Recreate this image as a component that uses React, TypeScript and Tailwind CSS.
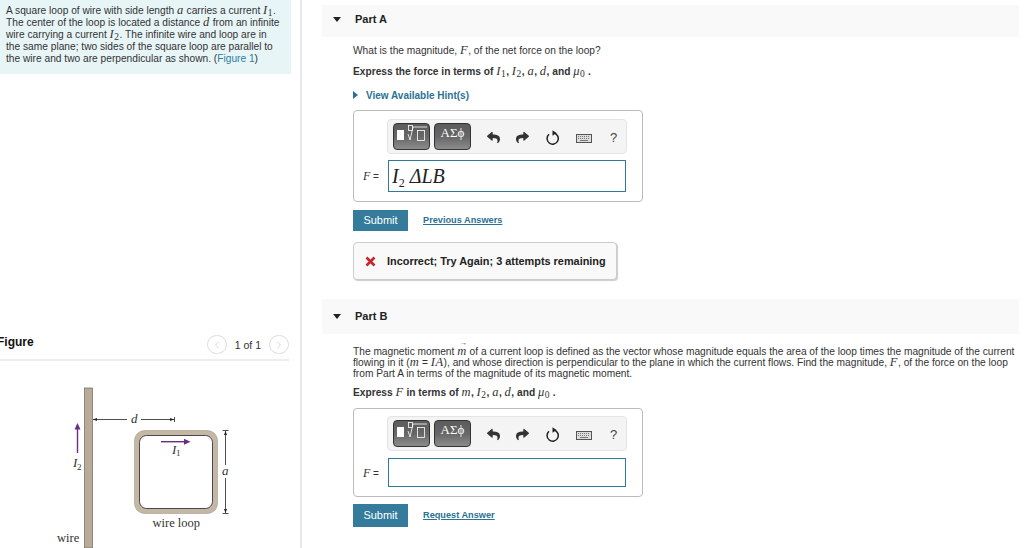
import { FaReply, FaShare } from 'react-icons/fa'
import { ChevronLeft, ChevronRight } from 'lucide-react'
import type { ReactNode } from 'react'

const serif = 'font-["Liberation_Serif",serif]'

function M({ children }: { children: ReactNode }) {
  return <span className={`${serif} italic text-[12.5px] leading-[0] font-normal tracking-[0.5px]`}>{children}</span>
}

function Sub({ base, sub }: { base: string; sub: string }) {
  return (
    <span className={`${serif} text-[12.5px] leading-[0] font-normal tracking-[0.5px]`}>
      <i>{base}</i>
      <span className="relative top-[2px] text-[9.5px] leading-[0]">{sub}</span>
    </span>
  )
}

function Toolbar() {
  return (
    <div className="ml-[33px] flex h-[35px] w-[240px] items-center rounded-[4px] border border-[#e4e4e4] bg-[#f4f4f4] pl-[5px]">
      <div className="h-[27px] w-[37px] rounded-[4px] border border-[#333] bg-gradient-to-b from-[#5c5c5c] via-[#666] to-[#8c8c8c]">
        <svg width="35" height="25" viewBox="0 0 35 25" fill="none">
          <rect x="3" y="6" width="7" height="10" fill="#fff" />
          <rect x="14.5" y="1.5" width="4" height="5" stroke="#fff" strokeWidth="0.8" />
          <path d="M14 10l2 6 3-13h14" stroke="#fff" strokeWidth="0.8" />
          <rect x="23.5" y="6.5" width="7" height="10" stroke="#fff" strokeWidth="0.8" />
        </svg>
      </div>
      <div className={`ml-[4px] flex h-[27px] w-[37px] justify-center rounded-[4px] border border-[#333] bg-gradient-to-b from-[#5c5c5c] via-[#666] to-[#8c8c8c] text-[13px] leading-[17px] text-white ${serif}`}>
        ΑΣϕ
      </div>
      <FaReply className="ml-[16px] mt-[2px] text-[#333]" size={13} />
      <FaShare className="ml-[16px] mt-[2px] text-[#333]" size={13} />
      <svg className="ml-[17px] mt-[2px]" width="14" height="15" viewBox="0 0 14 15" fill="none">
        <path d="M8 3.1A5.6 5.6 0 1 1 3 4.3" stroke="#222" strokeWidth="1.5" />
        <path d="M6.5 0.2v5.6L10.5 3z" fill="#222" />
      </svg>
      <svg className="ml-[16px] mt-[4px]" width="16" height="9" viewBox="0 0 16 9" fill="none">
        <rect x="0.5" y="0.5" width="15" height="8" fill="#ddd" stroke="#555" />
        <path d="M2 2.5h12M2 4.5h12" stroke="#777" strokeDasharray="1 1" />
        <path d="M4 6.5h8" stroke="#777" />
      </svg>
      <span className="ml-[18px] mt-[2px] text-[13px] text-[#444]">?</span>
    </div>
  )
}

function AnswerBox({ height, pad, gap, inputHeight, children }: { height: string; pad: string; gap: string; inputHeight: string; children?: ReactNode }) {
  return (
    <div className={`ml-[51px] w-[290px] rounded-[4px] border border-[#bbb] ${pad} ${height}`}>
      <Toolbar />
      <div className={`flex items-center ${gap}`}>
        <span className="ml-[9px] w-[25px] text-[10px] text-[#333]">
          <span className={`${serif} italic text-[12px]`}>F</span> =
        </span>
        <div className={`flex w-[238px] items-center border border-[#2f7a9a] pl-[3px] ${inputHeight}`}>{children}</div>
      </div>
    </div>
  )
}

function SubmitRow({ link, top, h }: { link: string; top: string; h: string }) {
  return (
    <div className={`ml-[51px] flex items-center ${top}`}>
      <div className={`flex w-[55px] items-center justify-center bg-[#347b9c] text-[11px] text-white ${h}`}>Submit</div>
      <span className="ml-[15px] text-[9.2px] font-bold text-[#2b7195] underline">{link}</span>
    </div>
  )
}

function PartHeader({ name, top, h }: { name: string; top: string; h: string }) {
  return (
    <div className={`ml-[20px] flex w-[697px] items-center bg-[#f9f9f9] ${top} ${h}`}>
      <div className="ml-[11px] h-0 w-0 border-x-[4px] border-t-[5px] border-x-transparent border-t-[#222]" />
      <span className="ml-[14px] text-[11px] font-bold text-[#222]">{name}</span>
    </div>
  )
}

function Figure() {
  return (
    <svg className="block" width="298" height="187" viewBox="0 361 298 187" fill="none">
      <rect x="84.5" y="388" width="8" height="160" fill="#b9ab98" stroke="#555" strokeWidth="0.6" />
      <rect x="134.5" y="430.5" width="83" height="83" rx="10" fill="#c4b7a5" stroke="#a89a88" strokeWidth="0.6" />
      <rect x="139.5" y="435.5" width="73" height="73" rx="7" fill="#fff" stroke="#222" strokeWidth="0.8" />
      <path d="M77.5 453v-25" stroke="#6a2d84" strokeWidth="1.4" />
      <path d="M77.5 423l-3 6.5h6z" fill="#6a2d84" />
      <path d="M161 441.7h24" stroke="#6a2d84" strokeWidth="1.4" />
      <path d="M190.5 441.7l-6.5-3v6z" fill="#6a2d84" />
      <path d="M93 419.5h34M141 419.5h33M174.5 417v5M225.5 431v34M225.5 478v35M222.5 430.5h6M222.5 513.5h6" stroke="#222" strokeWidth="0.8" />
      <path d="M93 419.5l4-1.5v3zM225.5 431l-1.5 4h3zM225.5 513l-1.5-4h3zM174 419.5l-4-1.5v3z" fill="#222" />
      <g fill="#333" fontFamily="Liberation Serif, serif" fontSize="12.5">
        <text x="131" y="423" fontSize="13" fontStyle="italic">d</text>
        <text x="222" y="475" fontSize="13" fontStyle="italic">a</text>
        <text x="73" y="467" fontSize="13" fontStyle="italic">I</text>
        <text x="77" y="470" fontSize="9">2</text>
        <text x="172" y="454" fontSize="13" fontStyle="italic">I</text>
        <text x="176" y="456" fontSize="9">1</text>
        <text x="152.5" y="527">wire loop</text>
        <text x="57" y="542">wire</text>
      </g>
    </svg>
  )
}

export default function App() {
  return (
    <div className='flex h-[548px] w-[1024px] overflow-hidden bg-white font-["Liberation_Sans",sans-serif] text-[10.2px] text-[#333]'>
      <div className="w-[302px] shrink-0 border-r-[2px] border-[#e6e8ea]">
        <div className="h-[74px] w-[291px] bg-[#e8f5f7] pl-[6px] pt-[5px] text-[10.2px] leading-[12px]">
          A square loop of wire with side length <M>a</M> carries a current <Sub base="I" sub="1" />.<br />
          The center of the loop is located a distance <M>d</M> from an infinite<br />
          wire carrying a current <Sub base="I" sub="2" />. The infinite wire and loop are in<br />
          the same plane; two sides of the square loop are parallel to<br />
          the wire and two are perpendicular as shown. (<span className="text-[#2b7ea1]">Figure 1</span>)
        </div>
        <div className="mt-[261px] flex h-[26px] w-[289px] items-start border-b-[2px] border-[#eee]">
          <span className="ml-[-3px] text-[12px] font-bold leading-[14px] text-[#111]">Figure</span>
          <div className="ml-auto flex items-center">
            <div className="flex h-[19px] w-[20px] items-center justify-center rounded-full border border-[#ddd] text-[#bbb]">
              <ChevronLeft size={12} strokeWidth={1.2} />
            </div>
            <span className="mx-[8px] mt-[2px] text-[10.5px]">1 of 1</span>
            <div className="flex h-[19px] w-[20px] items-center justify-center rounded-full border border-[#ddd] text-[#bbb]">
              <ChevronRight size={12} strokeWidth={1.2} />
            </div>
          </div>
        </div>
        <Figure />
      </div>

      <div className="min-w-0 flex-1">
        <PartHeader name="Part A" top="mt-[5px] pb-[3px]" h="h-[32px]" />
        <p className="ml-[51px] mt-[8px] leading-[12px]">
          What is the magnitude, <M>F</M>, of the net force on the loop?
        </p>
        <p className="ml-[51px] mt-[9px] font-bold leading-[12px]">
          Express the force in terms of <Sub base="I" sub="1" />, <Sub base="I" sub="2" />, <M>a</M>, <M>d</M>, and <Sub base="μ" sub="0" /> .
        </p>
        <div className="ml-[51px] mt-[11px] flex h-[12px] items-center text-[10px] font-bold text-[#2b7195]">
          <div className="h-0 w-0 border-y-[4px] border-l-[5px] border-y-transparent border-l-[#2b7195]" />
          <span className="ml-[8px]">View Available Hint(s)</span>
        </div>
        <div className="mt-[9px]">
          <AnswerBox height="h-[92px]" pad="pt-[8px]" gap="mt-[6px]" inputHeight="h-[32px]">
            <span className={`${serif} text-[20px] italic text-[#222]`}>
              I<span className="relative top-[4px] text-[12px] not-italic">2</span> ΔLB
            </span>
          </AnswerBox>
        </div>
        <SubmitRow link="Previous Answers" top="mt-[8px]" h="h-[21px]" />
        <div className="ml-[51px] mt-[11px] flex h-[38px] w-[264px] items-center rounded-[4px] border border-[#ccc] bg-[#f9f9f9] shadow-[1px_1px_1px_#ccc]">
          <svg className="ml-[11px]" width="11" height="11" viewBox="0 0 11 11">
            <path d="M1.5 1.5l8 8M9.5 1.5l-8 8" stroke="#c8242c" strokeWidth="2.6" />
          </svg>
          <span className="ml-[11px] text-[10.9px] font-bold text-[#222]">Incorrect; Try Again; 3 attempts remaining</span>
        </div>
        <PartHeader name="Part B" top="mt-[19px]" h="h-[35px]" />
        <p className="ml-[51px] mt-[12px] whitespace-nowrap leading-[11px]">
          The magnetic moment{' '}
          <span className="relative">
            <M>m</M>
            <span className="absolute left-[3px] top-[-7px] text-[7px] leading-[8px]">→</span>
          </span>{' '}
          of a current loop is defined as the vector whose magnitude equals the area of the loop times the magnitude of the current<br />
          flowing in it (<M>m</M> = <M>IA</M>), and whose direction is perpendicular to the plane in which the current flows. Find the magnitude, <M>F</M>, of the force on the loop<br />
          from Part A in terms of the magnitude of its magnetic moment.
        </p>
        <p className="ml-[51px] mt-[8px] font-bold leading-[12px]">
          Express <M>F</M> in terms of <M>m</M>, <Sub base="I" sub="2" />, <M>a</M>, <M>d</M>, and <Sub base="μ" sub="0" /> .
        </p>
        <div className="mt-[9px]">
          <AnswerBox height="h-[89px]" pad="pt-[7px]" gap="mt-[7px]" inputHeight="h-[29px]" />
        </div>
        <SubmitRow link="Request Answer" top="mt-[7px]" h="h-[23px]" />
      </div>
    </div>
  )
}
